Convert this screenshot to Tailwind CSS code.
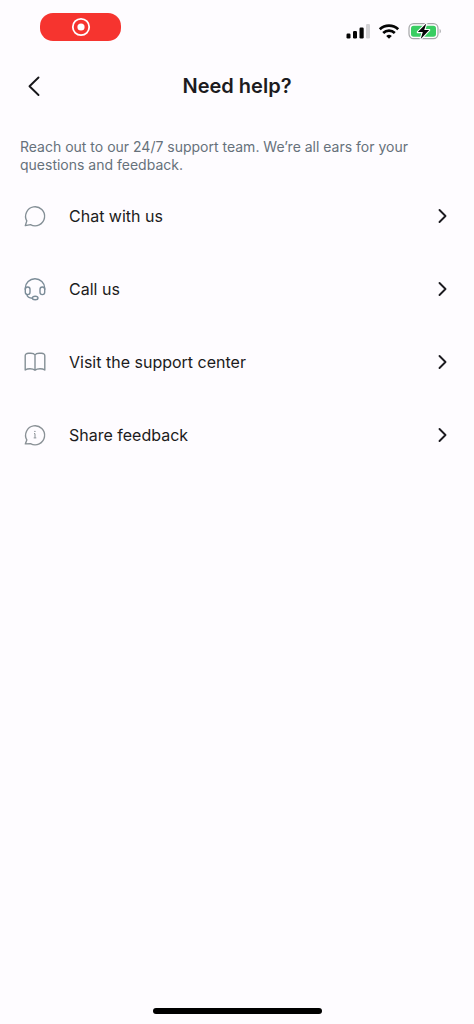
<!DOCTYPE html>
<html lang="en">
<head>
<meta charset="utf-8">
<meta name="viewport" content="width=device-width, initial-scale=1">
<title>Need help?</title>
<script src="https://cdn.jsdelivr.net/npm/@tailwindcss/browser@4"></script>
</head>
<body class="flex min-h-screen flex-col bg-[#fefcff] font-['Inter',sans-serif] text-[#1c1b20]">
  <div class="flex h-[60px] items-start justify-between pt-[13px] pr-8 pl-10">
    <div class="flex h-7 w-[81px] items-center justify-center rounded-[13px] bg-[#f6342f]">
      <svg class="size-5" viewBox="0 0 20 20" fill="none" aria-label="Recording"><circle cx="10" cy="10" r="8.2" stroke="#fff" stroke-width="1.8"/><circle cx="10" cy="10" r="3.6" fill="#fff"/></svg>
    </div>
    <div class="flex items-center gap-2 pt-2">
      <svg class="h-5 w-6" viewBox="0 0 24 20" aria-label="Signal"><g fill="#050505"><rect x="0.5" y="12.5" width="4" height="5" rx="1.2"/><rect x="7" y="10" width="4" height="7.500" rx="1.2"/><rect x="13.500" y="6.500" width="4.200" height="11" rx="1.200"/></g><rect x="20" y="3" width="4" height="14.500" rx="1.200" fill="#d2d1d4"/></svg>
      <svg class="h-5 w-[22px]" viewBox="0 0 22 20" aria-label="Wi-Fi" fill="none" stroke="#050505" stroke-width="2.700"><path d="M1.800 8.300A13.300 13.300 0 0 1 20.200 8.300"/><path d="M5.200 12A8.400 8.400 0 0 1 16.800 12"/><path d="M11 17.800 8.200 14.900A4.200 4.200 0 0 1 13.800 14.900Z" fill="#050505" stroke="none"/></svg>
      <svg class="h-5 w-[34px]" viewBox="0 0 34 20" aria-label="Charging"><rect x="1" y="2.700" width="29" height="15" rx="4.600" fill="#fff" stroke="#a5a6a8" stroke-width="1.200"/><rect x="3" y="4.700" width="25" height="11" rx="2.600" fill="#39cd62"/><path d="M31.600 8v4.400c1.600-.6 1.600-3.800 0-4.400Z" fill="#a5a6a8"/><path d="M18.300 2.400 9.800 11.100h5L12.700 18l8.500-8.900h-5Z" fill="#050505" stroke="#fff" stroke-width="2.200" stroke-linejoin="round" paint-order="stroke"/></svg>
    </div>
  </div>
  <header class="grid h-[52px] grid-cols-[48px_1fr_48px] items-center px-2.5">
    <button type="button" aria-label="Back" class="flex size-12 items-center justify-center"><svg class="size-6" viewBox="0 0 24 24" fill="none" stroke="#17161a" stroke-width="1.900" stroke-linecap="round" stroke-linejoin="round"><path d="M16.500 3.500 7.500 12.300 16.500 21"/></svg></button>
    <h1 class="text-center text-xl font-semibold">Need help?</h1>
  </header>
  <main class="flex grow flex-col">
    <p class="mt-[26px] px-5 text-sm leading-[18px] text-[#66717b]">Reach out to our 24/7 support team. We’re all ears for your questions and feedback.</p>
    <nav class="mt-[5px]">
      <a href="#chat" class="flex h-[73px] items-center pr-[27px] pl-[23px]">
        <svg class="size-6 shrink-0" viewBox="0 0 24 24" fill="none" stroke="#848f96" stroke-width="1.400" stroke-linejoin="round"><path d="M3.800 16.900A9.500 9.500 0 1 1 7.500 20.600L2.300 21.600Z"/></svg>
        <span class="ml-[22px] grow text-base">Chat with us</span>
        <svg class="h-4 w-3 shrink-0" viewBox="0 0 12 16" fill="none" stroke="#1c1b20" stroke-width="1.900" stroke-linecap="round" stroke-linejoin="round"><path d="m4.500 2 6 6-6 6"/></svg>
      </a>
      <a href="#call" class="flex h-[73px] items-center pr-[27px] pl-[23px]">
        <svg class="size-6 shrink-0" viewBox="0 0 24 24" fill="none" stroke="#7b8c98" stroke-width="1.400" stroke-linecap="round" stroke-linejoin="round"><path d="M2.300 12.500V11A9.700 9.300 0 0 1 21.700 11V12.500"/><rect x="2.300" y="10" width="4.700" height="7.600" rx="2.300"/><rect x="17" y="10" width="4.700" height="7.600" rx="2.300"/><path d="M3.800 17.300c.6 2.700 2.600 3.800 5.600 3.900"/><ellipse cx="12.200" cy="21" rx="2.800" ry="1.800"/></svg>
        <span class="ml-[22px] grow text-base">Call us</span>
        <svg class="h-4 w-3 shrink-0" viewBox="0 0 12 16" fill="none" stroke="#1c1b20" stroke-width="1.900" stroke-linecap="round" stroke-linejoin="round"><path d="m4.500 2 6 6-6 6"/></svg>
      </a>
      <a href="#support" class="flex h-[73px] items-center pr-[27px] pl-[23px]">
        <svg class="size-6 shrink-0" viewBox="0 0 24 24" fill="none" stroke="#848f96" stroke-width="1.400" stroke-linecap="round" stroke-linejoin="round"><path d="M12 5C11.200 3.700 9.800 3.300 7.800 3.300H5.500C3.300 3.300 2.200 4.200 2.200 5.800V20C3.600 19 5 18.700 7 18.700S10.600 19 12 20.200C13.400 19 15 18.700 17 18.700S20.400 19 21.800 20V5.800C21.800 4.200 20.700 3.300 18.500 3.300H16.200C14.200 3.300 12.800 3.700 12 5ZV20.200"/></svg>
        <span class="ml-[22px] grow text-base">Visit the support center</span>
        <svg class="h-4 w-3 shrink-0" viewBox="0 0 12 16" fill="none" stroke="#1c1b20" stroke-width="1.900" stroke-linecap="round" stroke-linejoin="round"><path d="m4.500 2 6 6-6 6"/></svg>
      </a>
      <a href="#feedback" class="flex h-[73px] items-center pr-[27px] pl-[23px]">
        <svg class="size-6 shrink-0" viewBox="0 0 24 24" fill="none" stroke="#8a9196" stroke-width="1.400" stroke-linejoin="round"><path d="M3.800 16.900A9.500 9.500 0 1 1 7.500 20.600L2.300 20.900Z"/><path d="M11 10.600H12V14.800M10.700 14.900h2.600" stroke-width="1"/><circle cx="11.900" cy="8.400" r=".7" fill="#8a9196" stroke="none"/></svg>
        <span class="ml-[22px] grow text-base">Share feedback</span>
        <svg class="h-4 w-3 shrink-0" viewBox="0 0 12 16" fill="none" stroke="#1c1b20" stroke-width="1.900" stroke-linecap="round" stroke-linejoin="round"><path d="m4.500 2 6 6-6 6"/></svg>
      </a>
    </nav>
  </main>
  <footer class="flex justify-center pb-2.5"><div class="h-1.5 w-[169px] rounded-full bg-black"></div></footer>
</body>
</html>
